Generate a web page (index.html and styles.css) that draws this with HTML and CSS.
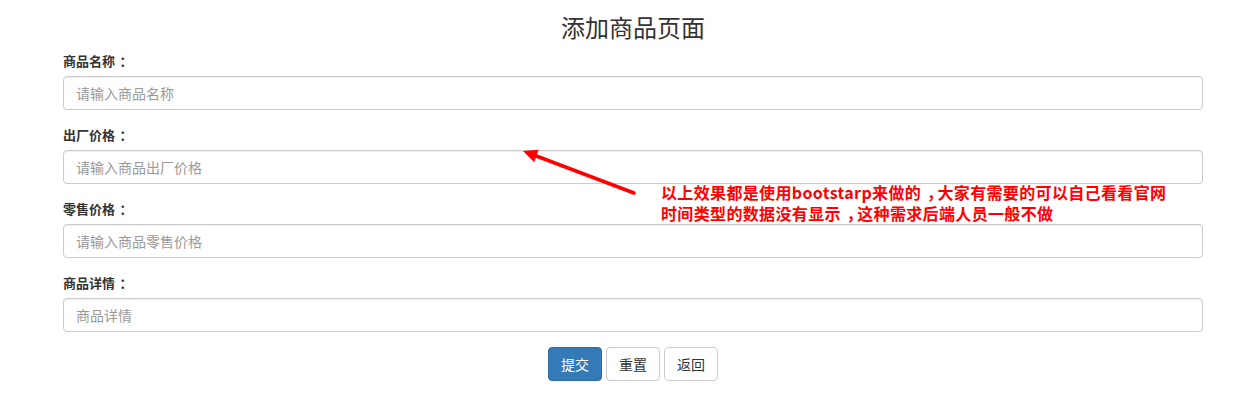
FILE: index.html
```html
<!DOCTYPE html>
<html lang="zh-CN">
<head>
<meta charset="utf-8">
<title>添加商品页面</title>
<link rel="stylesheet" href="styles.css">
</head>
<body>
<div class="page">
  <div class="container">
    <h3 class="title">添加商品页面</h3>
    <form class="form">
      <div class="form-group">
        <label class="label">商品名称<span class="punc">：</span></label>
        <input class="input" type="text" placeholder="请输入商品名称">
      </div>
      <div class="form-group">
        <label class="label">出厂价格<span class="punc">：</span></label>
        <input class="input" type="text" placeholder="请输入商品出厂价格">
      </div>
      <div class="form-group">
        <label class="label">零售价格<span class="punc">：</span></label>
        <input class="input" type="text" placeholder="请输入商品零售价格">
      </div>
      <div class="form-group">
        <label class="label">商品详情<span class="punc">：</span></label>
        <input class="input" type="text" placeholder="商品详情">
      </div>
      <div class="actions">
        <button class="btn btn-primary" type="button">提交</button>
        <button class="btn" type="button">重置</button>
        <button class="btn" type="button">返回</button>
      </div>
    </form>
  </div>
  <svg class="arrow" width="130" height="60" viewBox="0 0 130 60">
    <line x1="20" y1="12.5" x2="119" y2="50" stroke="#ff0000" stroke-width="3.5" stroke-linecap="round"/>
    <polygon points="8,8 23.6,6.8 19.2,19.2" fill="#ff0000"/>
  </svg>
  <div class="note">
    <div class="note-line">以上效果都是使用bootstarp来做的<span class="punc">，</span>大家有需要的可以自己看看官网</div>
    <div class="note-line">时间类型的数据没有显示<span class="punc">，</span>这种需求后端人员一般不做</div>
  </div>
</div>
</body>
</html>
```
FILE: styles.css
```css
* { box-sizing: border-box; }
html, body { margin: 0; padding: 0; background: #fff; }
body {
  font-family: "Noto Sans CJK SC", "Liberation Sans", sans-serif;
  font-size: 14px;
  line-height: 20px;
  color: #333;
}
.page { position: relative; width: 1234px; height: 397px; overflow: hidden; }
.container { margin-left: 63px; width: 1140px; }
.title {
  margin: 14px 0 11px;
  font-size: 24px;
  line-height: 26.4px;
  font-weight: 400;
  text-align: center;
  color: #333;
}
.form { margin: 0; }
.form-group { margin-bottom: 15px; }
.label {
  display: block;
  margin-bottom: 5px;
  font-size: 13px;
  line-height: 20px;
  font-weight: 700;
  color: #333;
}
.punc {
  display: inline-block;
  padding-left: 0.35em;
  margin-right: -0.35em;
}
.input {
  display: block;
  width: 100%;
  height: 34px;
  padding: 6px 12px;
  font-family: inherit;
  font-size: 14px;
  line-height: 20px;
  color: #555;
  background: #fff;
  border: 1px solid #ccc;
  border-radius: 4px;
  box-shadow: inset 0 1px 1px rgba(0,0,0,.075);
  outline: none;
}
.input::placeholder { color: #999; }
.actions { display: flex; justify-content: center; gap: 4px; }
.btn {
  height: 34px;
  padding: 6px 12px;
  font-family: inherit;
  font-size: 14px;
  line-height: 20px;
  color: #333;
  background: #fff;
  border: 1px solid #ccc;
  border-radius: 4px;
}
.btn-primary { color: #fff; background: #337ab7; border-color: #2e6da4; }
.arrow { position: absolute; left: 515px; top: 143px; }
.note {
  position: absolute;
  left: 661px;
  top: 182px;
  font-size: 16px;
  font-weight: 700;
  letter-spacing: 0.35px;
  color: #ff0000;
  white-space: nowrap;
}
.note-line { height: 21px; line-height: 21px; }
```
